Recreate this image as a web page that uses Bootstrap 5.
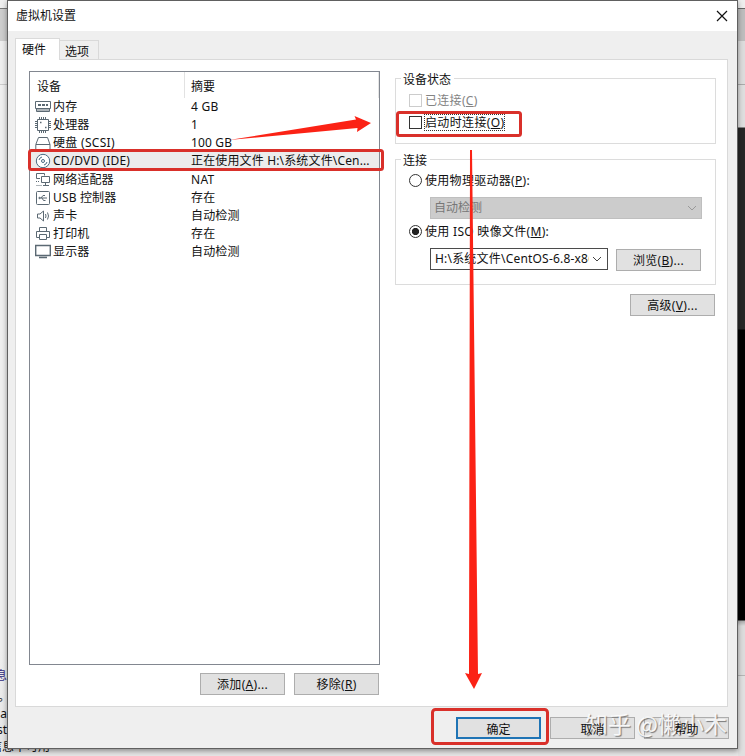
<!DOCTYPE html>
<html lang="zh-CN">
<head>
<meta charset="utf-8">
<title>虚拟机设置</title>
<link rel="stylesheet" href="https://cdn.jsdelivr.net/npm/bootstrap@5.3.0/dist/css/bootstrap.min.css">
<style>
body{width:745px;height:756px;font:12px/18px "Noto Sans","Noto Sans CJK SC",sans-serif;color:#111;background:#e6e6e6}
.desk{width:745px;height:756px}
.edge-l{width:7px;background:linear-gradient(#eee 0 8px,#777 8px 9px,#cdcdcd 9px 41px,#eee 41px 84px,#ccc 84px 85px,#efefef 85px 650px,#e4e4e4)}
.edge-r{width:7px;background:linear-gradient(#eee 0 8px,#666 8px 9px,#bdbdbd 9px 41px,#dcdcdc 41px 84px,#aaa 84px 85px,#dedede 85px 127px,#262626 128px 329px,#000 330px 620px,#aaa 621px,#dcdcdc 626px 675px,#b5b5b5 675px 676px,#e0e0e0 676px)}
.win{width:731px;height:749px;border:1px solid #606060;background:#efefef;box-shadow:0 2px 5px rgba(0,0,0,.4)}
.cap{height:30px;background:#fff;padding:0 8px}
.cap svg{margin-right:1px}
.tabs{height:29px;padding-left:7px;margin-bottom:-1px}
.tab-a{width:45px;height:22px;background:#fff;border:1px solid #dadada;border-bottom:0;padding-left:6px;line-height:21px}
.tab-b{width:39px;height:20px;border:1px solid #d9d9d9;border-left:0;padding-left:5px;line-height:21px}
.pane{width:713px;height:649px;margin-left:7px;background:#fff;border:1px solid #d9d9d9;padding:11px 11px 0 13px}
.devs{width:351px;height:594px;border:1px solid #828790}
.devs .hd{height:26px;line-height:30px}
.hd .c1{width:155px;border-right:1px solid #e2e2e2;padding-left:7px}
.hd .c2{padding-left:6px;flex:1;border-right:1px solid #e5e5e5}
.dv{height:18px;padding-left:5px;letter-spacing:.15px}
.dv:nth-child(5){margin-bottom:1px}
.dv .lt{letter-spacing:.3px}
.dv svg{width:16px;height:16px;flex:none;margin-right:2px}
.dv .nm{width:138px}
.dv.on{background:#ececec}
.k{height:22px;width:85px;border:1px solid #adadad;background:#e1e1e1;color:#111;font-size:12px;line-height:22px;padding:0;border-radius:0;letter-spacing:.3px}
.k.main{border:2px solid #1f74b5;line-height:22px;letter-spacing:0}
.k.low{line-height:24px;letter-spacing:0}
.k .over{position:relative;z-index:4}
.pair{gap:9px;margin:8px 1px 0 0}
.side{padding-top:7px}
.grp{width:321px;border:1px solid #dcdcdc;padding:0 13px}
.grp .lg{align-self:flex-start;background:#fff;line-height:20px;height:18px;margin:-9px 0 0 -8px;padding:0 3px 0 2px}
.g1{height:66px}.g2{height:126px;margin-top:15px}
.g1 .lg+.opt{margin-top:2px}.g2 .opt{margin-top:2px}
.g2 .lg+.opt{margin-top:1px}
.bx{width:13px;height:13px;border:1px solid #333;background:#fff;flex:none}
.g1 .bx{margin-top:-1px}
.rd{border-radius:50%}
.rd.on{background:radial-gradient(circle,#222 0 3.2px,#fff 4px)}
.off{color:#838383}.bx.off{border-color:#ccc}
.opt{height:22px;gap:3px;letter-spacing:.3px}
.opt span{padding-top:1px}
.opt .foc{outline:1px dotted #333;outline-offset:-1px;line-height:16px;padding:1px 1px 0;margin-left:-1px;letter-spacing:.35px}
.dd{height:22px;padding-left:4px;border:1px solid #4b4b4b;background:#fff}
.dd.dis{width:272px;margin:5px 0 0 21px;border-color:#bfbfbf;background:#ccc;color:#777;padding-left:3px;line-height:20px}
.iso{margin:5px -2px 0 21px;gap:8px}
.iso .dd{width:178px}
.iso .k{margin-top:1px}
.clip{width:154px;overflow:hidden;white-space:nowrap;letter-spacing:.2px}
.adv{margin-top:9px;margin-right:1px}
.foot{height:41px;padding:10px 8px 0 0;gap:9px}
.ink,.frag,.wm{position:absolute;pointer-events:none}
.ink{left:0;top:0;z-index:4}
.frag{z-index:0;white-space:nowrap;direction:rtl;right:738px}
.wm{left:585px;top:708px;z-index:3;font:23px/30px "Noto Sans CJK SC",sans-serif;color:rgba(255,255,255,.9);text-shadow:1px 1px 1px #777;white-space:nowrap}
</style>
<script src="https://cdn.jsdelivr.net/npm/bootstrap@5.3.0/dist/js/bootstrap.bundle.min.js"></script>
</head>
<body class="overflow-hidden">
<div class="desk d-flex align-items-start position-relative overflow-hidden">
  <div class="edge-l h-100"></div>
  <span class="frag" style="top:667px;color:#332c80">息</span>
  <span class="frag" style="top:688px;right:735px">。</span>
  <span class="frag" style="top:705px">a</span>
  <span class="frag" style="top:721px">st</span>
  <span class="frag" style="top:738px;right:695px">信息不可用</span>
  <main class="win position-relative d-flex flex-column">
    <header class="cap d-flex justify-content-between align-items-center"><span>虚拟机设置</span>
      <svg width="12" height="12" viewBox="0 0 12 12" stroke="#111" stroke-width="1.2"><path d="M1 1l10 10M11 1L1 11"/></svg></header>
    <nav class="tabs d-flex align-items-end position-relative"><div class="tab-a">硬件</div><div class="tab-b">选项</div></nav>
    <section class="pane d-flex justify-content-between">
      <div>
        <div class="devs">
          <div class="hd d-flex"><span class="c1">设备</span><span class="c2">摘要</span></div>
          <div class="dv d-flex align-items-center"><svg viewBox="0 0 16 16" fill="none" stroke="#5b6973"><path d="M.5 2.500h15v7h-15zM1.500 9.500v3h13v-3M3 12v-2m2 2v-2m2 2v-2m2 2v-2m2 2v-2m2 2v-2"/><path d="M3 6h3m1 0h3m1 0h2" stroke-width="2"/></svg><span class="nm">内存</span><span class="lt">4 GB</span></div>
          <div class="dv d-flex align-items-center"><svg viewBox="0 0 16 16" fill="none" stroke="#5b6973"><path d="M2.500 2.500h11v11h-11z"/><path d="M4.500 0v2m2-2v2m2-2v2m2-2v2M4.500 14v2m2-2v2m2-2v2m2-2v2M0 4.500h2M0 6.500h2M0 8.500h2m-2 2h2m12-6h2m-2 2h2m-2 2h2m-2 2h2"/><path d="M5 5.500h1.500M10 10.500h1.500" stroke-width="1.500"/></svg><span class="nm">处理器</span><span>1</span></div>
          <div class="dv d-flex align-items-center"><svg viewBox="0 0 16 16" fill="none" stroke="#5b6973"><path d="M3.500 2.500h9l2.500 7v5H.8v-5zM1 9.500h14"/></svg><span class="nm lt">硬盘 (SCSI)</span><span>100 GB</span></div>
          <div class="dv on d-flex align-items-center"><svg viewBox="0 0 16 16" fill="none" stroke="#4b6b82"><circle cx="8" cy="8" r="6.700" fill="#fff"/><circle cx="8" cy="8" r="1.500"/><path d="M4 7a4 4 0 013-3M12 9a4 4 0 01-3 3"/></svg><span class="nm">CD/DVD (IDE)</span><span>正在使用文件 H:\系统文件\Cen...</span></div>
          <div class="dv d-flex align-items-center"><svg viewBox="0 0 16 16" fill="none" stroke="#5b6973"><path d="M9.500 3.500V1.500H1.500v5H5M14.500 4.500h-8v6h8zM10.500 11v2.500M8 13.500h6"/><path d="M1 9.500h4M1.500 13.500h5" stroke-dasharray="1 1"/></svg><span class="nm">网络适配器</span><span class="lt">NAT</span></div>
          <div class="dv d-flex align-items-center"><svg viewBox="0 0 16 16" fill="none" stroke="#5b6973"><rect x="1.500" y="1.500" width="13" height="13" rx="1"/><path d="M4 8h8M6 8l2-2.500h2M7 8l1.500 2.500h2"/><circle cx="4.500" cy="8" r=".7"/></svg><span class="nm">USB 控制器</span><span>存在</span></div>
          <div class="dv d-flex align-items-center"><svg viewBox="0 0 16 16" fill="none" stroke="#5b6973"><path d="M2.500 6v4H5l3.500 3V3L5 6zM10.500 6q1 2 0 4M12.500 4.500q2 3.500 0 7"/></svg><span class="nm">声卡</span><span>自动检测</span></div>
          <div class="dv d-flex align-items-center"><svg viewBox="0 0 16 16" fill="none" stroke="#5b6973"><path d="M4.500 5.500V1.500h7v4M4 11.500H1.500v-6h13v6H12M4.500 8.500h7v5h-7z"/></svg><span class="nm">打印机</span><span>存在</span></div>
          <div class="dv d-flex align-items-center"><svg viewBox="0 0 16 16" fill="none" stroke="#5b6973"><path d="M.7 1.500h14.600v10H.7zM4 13.500h8" stroke-width="1.400"/></svg><span class="nm">显示器</span><span>自动检测</span></div>
        </div>
        <div class="pair d-flex justify-content-end"><button class="btn k">添加(<u>A</u>)...</button><button class="btn k">移除(<u>R</u>)</button></div>
      </div>
      <div class="side d-flex flex-column">
        <div class="grp g1 d-flex flex-column"><span class="lg">设备状态</span>
          <label class="opt off d-flex align-items-center"><i class="bx off"></i><span>已连接(<u>C</u>)</span></label>
          <label class="opt d-flex align-items-center"><i class="bx"></i><span class="foc">启动时连接(<u>O</u>)</span></label>
        </div>
        <div class="grp g2 d-flex flex-column"><span class="lg">连接</span>
          <label class="opt d-flex align-items-center"><i class="bx rd"></i><span>使用物理驱动器(<u>P</u>):</span></label>
          <div class="dd dis d-flex justify-content-between align-items-center"><span>自动检测</span><svg width="16" height="8" viewBox="0 0 16 8" fill="none" stroke="#999"><path d="M3 2l4 4 4-4"/></svg></div>
          <label class="opt d-flex align-items-center"><i class="bx rd on"></i><span>使用 ISO 映像文件(<u>M</u>):</span></label>
          <div class="iso d-flex"><div class="dd d-flex align-items-center"><span class="clip">H:\系统文件\CentOS-6.8-x86_64</span><svg width="16" height="8" viewBox="0 0 16 8" fill="none" stroke="#444"><path d="M4 2l4 4 4-4"/></svg></div><button class="btn k">浏览(<u>B</u>)...</button></div>
        </div>
        <button class="btn k adv align-self-end">高级(<u>V</u>)...</button>
      </div>
    </section>
    <footer class="foot d-flex justify-content-end"><button class="btn k main">确定</button><button class="btn k low"><span class="over">取消</span></button><button class="btn k low"><span class="over">帮助</span></button></footer>
  </main>
  <div class="edge-r h-100"></div>
  <span class="wm">知乎 @懒小木</span>
  <svg class="ink" width="745" height="756" fill="none" stroke="#d9302a" stroke-width="3">
    <rect x="29.500" y="150.500" width="353" height="19" rx="2"/><rect x="397.500" y="112.500" width="123" height="23" rx="2"/><rect x="432.500" y="709.500" width="115" height="34" rx="3"/>
    <path fill="#fb2215" stroke="none" d="M229 140L356 119.500 354.500 116 371 123 357 132 357.500 128zM470 150h2l6 524 4-1-8 16-9-16 4 1z"/>
  </svg>
</div>
</body>
</html>
